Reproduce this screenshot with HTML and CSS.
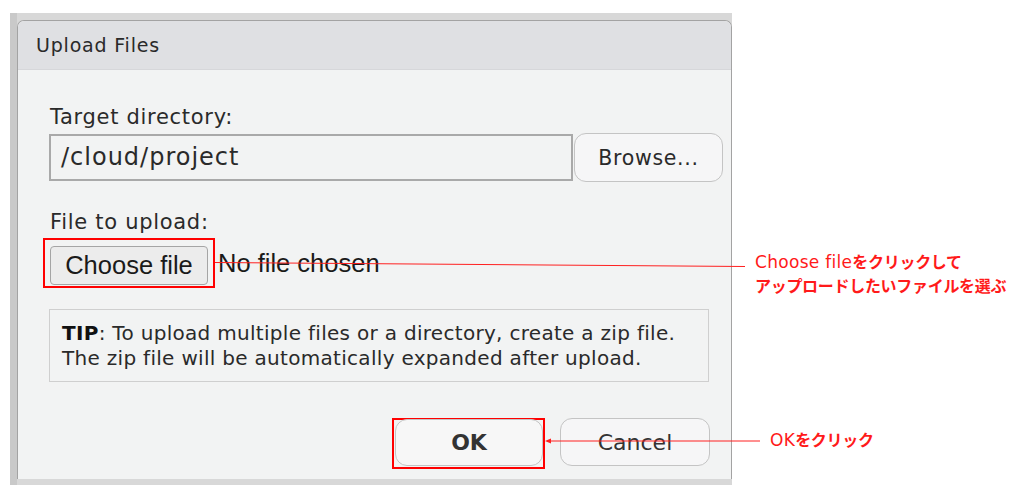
FILE: index.html
```html
<!DOCTYPE html>
<html>
<head>
<meta charset="utf-8">
<link rel="stylesheet" href="styles.css">
</head>
<body>
<div class="stage">
  <div class="frame">
    <div class="dialog">
      <div class="titlebar">Upload Files</div>
      <div class="content">
        <div class="label">Target directory:</div>
        <div class="dir-row">
          <div class="dir-input">/cloud/project</div>
          <div class="btn browse">Browse...</div>
        </div>
        <div class="label label2">File to upload:</div>
        <div class="file-row">
          <div class="hl hl-choose"><div class="choose">Choose file</div></div>
          <div class="nofile">No file chosen</div>
        </div>
        <div class="tip"><b>TIP</b>: To upload multiple files or a directory, create a zip file.<br>The zip file will be automatically expanded after upload.</div>
        <div class="actions">
          <div class="hl hl-ok"><div class="btn ok">OK</div></div>
          <div class="btn cancel">Cancel</div>
        </div>
      </div>
    </div>
  </div>
</div>
<svg class="lines" width="1024" height="492" viewBox="0 0 1024 492">
  <line x1="215" y1="262.5" x2="745" y2="266.5" stroke="#ff2020" stroke-width="1"/>
  <line x1="547" y1="441" x2="760" y2="441" stroke="#ff2020" stroke-width="1"/>
  <polygon points="545,441 551,438.5 551,443.5" fill="#ff2020"/>
</svg>
<div class="note note1"><span class="lat">Choose file</span>をクリックして<br>アップロードしたいファイルを選ぶ</div>
<div class="note note2"><span class="lat">OK</span>をクリック</div>
</body>
</html>
```
FILE: styles.css
```css
html, body { margin: 0; padding: 0; background: #ffffff; }
body { width: 1024px; height: 492px; overflow: hidden; position: relative; font-family: "DejaVu Sans", sans-serif; color: #2a2a2a; }
.stage { padding: 13px 0 0 10px; }
.frame { width: 715px; height: 465px; padding: 7px 0 0 7px; background: linear-gradient(to right, #c9c9c9 0, #c9c9c9 7px, #d8d8d8 7px); }
.dialog { width: 713px; height: 458px; border: 1px solid #a3a3a3; border-bottom: none; border-radius: 7px 7px 0 0; background: #f2f3f3; overflow: hidden; }
.titlebar { height: 48px; background: #dfe0e3; border-bottom: 1px solid #d6d7da; font-size: 19px; letter-spacing: 0.8px; padding: 0 0 0 18px; display: flex; align-items: center; }
.content { padding: 32px 0 0 32px; }
.label { font-size: 21px; height: 30px; line-height: 30px; letter-spacing: 0.7px; }
.label2 { margin-top: 25px; }
.dir-row { display: flex; align-items: center; gap: 1px; margin-top: 1px; margin-left: -1px; }
.dir-input { width: 510px; height: 43px; border: 2px solid #a9a9a9; box-sizing: content-box; background: #f2f3f3; font-size: 24px; line-height: 43px; padding-left: 10px; letter-spacing: 1px; }
.btn { box-sizing: border-box; border: 1.5px solid #c4c4c4; border-radius: 12px; background: #f6f6f7; display: flex; align-items: center; justify-content: center; }
.browse { width: 149px; height: 49px; font-size: 20.5px; letter-spacing: 0.7px; }
.file-row { display: flex; align-items: flex-start; margin-top: 1px; margin-left: -7px; }
.hl { border: 2px solid #ff0000; box-sizing: border-box; }
.hl-choose { width: 172px; height: 50px; padding: 6px 0 0 5px; }
.choose { width: 158px; height: 39px; box-sizing: border-box; border: 1.5px solid #a5a5a5; border-radius: 4px; background: #ececec; color: #1a1a1a; font-family: "Liberation Sans", Arial, sans-serif; font-size: 25.5px; display: flex; align-items: center; justify-content: center; }
.nofile { font-family: "Liberation Sans", Arial, sans-serif; color: #1a1a1a; font-size: 25.5px; line-height: 39px; margin: 6px 0 0 3px; }
.tip { width: 660px; height: 73px; box-sizing: border-box; border: 1.5px solid #cfcfcf; margin-top: 21px; margin-left: -1px; font-size: 20px; line-height: 25px; padding: 11px 0 0 12px; letter-spacing: 0.3px; }
.tip b { color: #111; }
.actions { display: flex; gap: 15px; margin: 36px 0 0 342px; align-items: flex-start; }
.hl-ok { width: 153px; height: 51px; padding: 0 0 0 1px; }
.ok { width: 148px; height: 47px; margin-top: -1px; font-weight: bold; font-size: 22px; background: #f7f7f7; color: #333; }
.cancel { width: 150px; height: 48px; font-size: 22px; color: #333; }
.lines { position: absolute; left: 0; top: 0; pointer-events: none; }
.note { position: absolute; color: #ff1a1a; font-family: "Noto Sans CJK JP", sans-serif; font-weight: bold; font-size: 16px; line-height: 23px; letter-spacing: -0.3px; }
.note .lat { font-family: "DejaVu Sans", sans-serif; font-weight: normal; font-size: 17px; letter-spacing: 0.3px; }
.note1 { left: 755px; top: 250px; }
.note2 { left: 770px; top: 428px; }
```
